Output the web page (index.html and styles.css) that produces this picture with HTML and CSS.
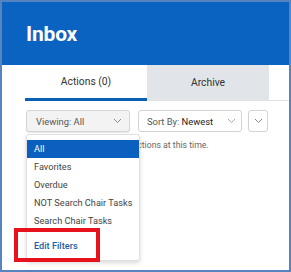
FILE: index.html
```html
<!DOCTYPE html>
<html lang="en">
<head>
<meta charset="UTF-8">
<title>Inbox</title>
<link rel="stylesheet" href="styles.css">
</head>
<body>
<div class="frame">
  <div class="header">
    <h1>Inbox</h1>
  </div>

  <div class="tabs">
    <div class="tab active">Actions (0)</div>
    <div class="tab">Archive</div>
  </div>

  <div class="toolbar">
    <div class="select viewing">
      <span>Viewing: All</span>
      <svg class="chev" width="9" height="6" viewBox="0 0 9 6"><path d="M1 1l3.5 3.5L8 1" fill="none" stroke="#888" stroke-width="1"/></svg>
    </div>
    <div class="select sort">
      <span>Sort By: <b>Newest</b></span>
      <svg class="chev" width="9" height="6" viewBox="0 0 9 6"><path d="M1 1l3.5 3.5L8 1" fill="none" stroke="#aaa" stroke-width="1"/></svg>
    </div>
    <div class="select small">
      <svg width="9" height="6" viewBox="0 0 9 6"><path d="M1 1l3.5 3.5L8 1" fill="none" stroke="#888" stroke-width="1"/></svg>
    </div>
  </div>

  <p class="empty">There are no actions at this time.</p>

  <div class="menu">
    <div class="menu-item selected">All</div>
    <div class="menu-item">Favorites</div>
    <div class="menu-item">Overdue</div>
    <div class="menu-item">NOT Search Chair Tasks</div>
    <div class="menu-item">Search Chair Tasks</div>
    <div class="menu-item edit">Edit Filters</div>
  </div>

  <div class="highlight"></div>
</div>
</body>
</html>
```

FILE: styles.css
```css
* {
  box-sizing: border-box;
}

body {
  margin: 0;
  font-family: Roboto, "Liberation Sans", sans-serif;
  background-color: #fff;
}

.frame {
  position: relative;
  width: 291px;
  height: 272px;
  border: 2px solid #5783c0;
  overflow: hidden;
}

.header {
  height: 63px;
  background-color: #0b63c1;
  padding-left: 24px;
  display: flex;
  align-items: center;
}

.header h1 {
  margin: 0;
  color: #fff;
  font-size: 21px;
  font-weight: 700;
  letter-spacing: -0.2px;
}

.tabs {
  display: flex;
  margin-left: 23px;
  border-bottom: 1px solid #e2e2e2;
}

.tab {
  width: 122px;
  height: 35px;
  display: flex;
  align-items: center;
  justify-content: center;
  font-size: 10.3px;
  color: #333;
  background-color: #e1e5e9;
}

.tab.active {
  background-color: #fff;
  border-bottom: 3px solid #0b5fb5;
  margin-bottom: -1px;
  height: 36px;
}

.toolbar {
  display: flex;
  margin: 9px 0 0 24px;
}

.select {
  height: 22px;
  border: 1px solid #d4d4d4;
  border-radius: 3px;
  display: flex;
  align-items: center;
  justify-content: space-between;
  font-size: 9.4px;
  color: #555;
  background-color: #fff;
}

.select b {
  font-weight: 400;
  color: #222;
}

.viewing {
  width: 104px;
  padding: 0 7px 0 9px;
  background-color: #f3f3f3;
  box-shadow: 0 1px 1px rgba(0, 0, 0, 0.08);
}

.sort {
  width: 104px;
  margin-left: 8px;
  padding: 0 5px 0 8px;
}

.small {
  width: 20px;
  margin-left: 6px;
  justify-content: center;
}

.empty {
  margin: 7px 0 0 80px;
  font-size: 8.7px;
  line-height: 12px;
  color: #666;
}

.menu {
  position: absolute;
  left: 24px;
  top: 132px;
  width: 114px;
  height: 127px;
  background-color: #fff;
  border: 1px solid #e0e0e0;
  border-radius: 3px;
  box-shadow: 0 2px 4px rgba(0, 0, 0, 0.15);
  padding-top: 5px;
}

.menu-item {
  height: 18px;
  line-height: 18px;
  padding-left: 7px;
  font-size: 9.2px;
  color: #444;
  white-space: nowrap;
}

.menu-item.selected {
  background-color: #0b5fbf;
  color: #fff;
}

.menu-item.edit {
  margin-top: 7px;
  color: #1b5ea6;
  font-weight: 500;
}

.highlight {
  position: absolute;
  left: 12px;
  top: 226px;
  width: 86px;
  height: 34px;
  border: 4px solid #e8121c;
}
```
